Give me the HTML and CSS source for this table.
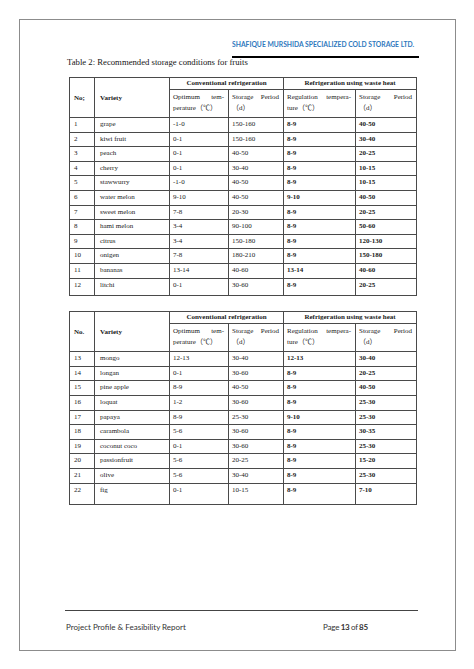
FILE: index.html
```html
<!DOCTYPE html>
<html lang="en">
<head>
<meta charset="utf-8">
<title>Recommended storage conditions for fruits</title>
<link rel="stylesheet" href="styles.css">
</head>
<body>
<div class="page">
  <header class="doc-header">
    <div class="company">SHAFIQUE MURSHIDA SPECIALIZED COLD STORAGE LTD.</div>
    <div class="header-rule"></div>
  </header>
  <div class="caption">Table 2: Recommended storage conditions for fruits</div>

  <table class="fruit-table t1">
    <colgroup>
      <col class="c-no"><col class="c-var"><col class="c-opt"><col class="c-sto"><col class="c-reg"><col class="c-sto2">
    </colgroup>
    <thead>
      <tr class="h-a">
        <th rowspan="2" class="mid no">No;</th>
        <th rowspan="2" class="mid var">Variety</th>
        <th colspan="2" class="group">Conventional refrigeration</th>
        <th colspan="2" class="group">Refrigeration using waste heat</th>
      </tr>
      <tr class="h-b">
        <td class="sub"><div class="just"><span>Optimum</span><span>tem-</span></div><div>perature（℃）</div></td>
        <td class="sub"><div class="just"><span>Storage</span><span>Period</span></div><div>（d）</div></td>
        <td class="sub"><div class="just"><span>Regulation</span><span>tempera-</span></div><div>ture（℃）</div></td>
        <td class="sub"><div class="just"><span>Storage</span><span>Period</span></div><div>（d）</div></td>
      </tr>
    </thead>
    <tbody>
      <tr class="r"><td class="no">1</td><td class="var">grape</td><td>-1-0</td><td>150-160</td><td class="b">8-9</td><td class="b">40-50</td></tr>
      <tr class="r"><td class="no">2</td><td class="var">kiwi fruit</td><td>0-1</td><td>150-160</td><td class="b">8-9</td><td class="b">30-40</td></tr>
      <tr class="r"><td class="no">3</td><td class="var">peach</td><td>0-1</td><td>40-50</td><td class="b">8-9</td><td class="b">20-25</td></tr>
      <tr class="r"><td class="no">4</td><td class="var">cherry</td><td>0-1</td><td>30-40</td><td class="b">8-9</td><td class="b">10-15</td></tr>
      <tr class="r"><td class="no">5</td><td class="var">stawwurry</td><td>-1-0</td><td>40-50</td><td class="b">8-9</td><td class="b">10-15</td></tr>
      <tr class="r"><td class="no">6</td><td class="var">water melon</td><td>9-10</td><td>40-50</td><td class="b">9-10</td><td class="b">40-50</td></tr>
      <tr class="r"><td class="no">7</td><td class="var">sweet melon</td><td>7-8</td><td>20-30</td><td class="b">8-9</td><td class="b">20-25</td></tr>
      <tr class="r"><td class="no">8</td><td class="var">hami melon</td><td>3-4</td><td>90-100</td><td class="b">8-9</td><td class="b">50-60</td></tr>
      <tr class="r"><td class="no">9</td><td class="var">citrus</td><td>3-4</td><td>150-180</td><td class="b">8-9</td><td class="b">120-130</td></tr>
      <tr class="r"><td class="no">10</td><td class="var">onigen</td><td>7-8</td><td>180-210</td><td class="b">8-9</td><td class="b">150-180</td></tr>
      <tr class="r"><td class="no">11</td><td class="var">bananas</td><td>13-14</td><td>40-60</td><td class="b">13-14</td><td class="b">40-60</td></tr>
      <tr class="r last1"><td class="no">12</td><td class="var">litchi</td><td>0-1</td><td>30-60</td><td class="b">8-9</td><td class="b">20-25</td></tr>
    </tbody>
  </table>

  <table class="fruit-table t2">
    <colgroup>
      <col class="c-no"><col class="c-var"><col class="c-opt"><col class="c-sto"><col class="c-reg"><col class="c-sto2">
    </colgroup>
    <thead>
      <tr class="h-a">
        <th rowspan="2" class="mid no">No.</th>
        <th rowspan="2" class="mid var">Variety</th>
        <th colspan="2" class="group">Conventional refrigeration</th>
        <th colspan="2" class="group">Refrigeration using waste heat</th>
      </tr>
      <tr class="h-b">
        <td class="sub"><div class="just"><span>Optimum</span><span>tem-</span></div><div>perature（℃）</div></td>
        <td class="sub"><div class="just"><span>Storage</span><span>Period</span></div><div>（d）</div></td>
        <td class="sub"><div class="just"><span>Regulation</span><span>tempera-</span></div><div>ture（℃）</div></td>
        <td class="sub"><div class="just"><span>Storage</span><span>Period</span></div><div>（d）</div></td>
      </tr>
    </thead>
    <tbody>
      <tr class="r"><td class="no">13</td><td class="var">mongo</td><td>12-13</td><td>30-40</td><td class="b">12-13</td><td class="b">30-40</td></tr>
      <tr class="r"><td class="no">14</td><td class="var">longan</td><td>0-1</td><td>30-60</td><td class="b">8-9</td><td class="b">20-25</td></tr>
      <tr class="r"><td class="no">15</td><td class="var">pine apple</td><td>8-9</td><td>40-50</td><td class="b">8-9</td><td class="b">40-50</td></tr>
      <tr class="r"><td class="no">16</td><td class="var">loquat</td><td>1-2</td><td>30-60</td><td class="b">8-9</td><td class="b">25-30</td></tr>
      <tr class="r"><td class="no">17</td><td class="var">papaya</td><td>8-9</td><td>25-30</td><td class="b">9-10</td><td class="b">25-30</td></tr>
      <tr class="r"><td class="no">18</td><td class="var">carambola</td><td>5-6</td><td>30-60</td><td class="b">8-9</td><td class="b">30-35</td></tr>
      <tr class="r"><td class="no">19</td><td class="var">coconut coco</td><td>0-1</td><td>30-60</td><td class="b">8-9</td><td class="b">25-30</td></tr>
      <tr class="r"><td class="no">20</td><td class="var">passionfruit</td><td>5-6</td><td>20-25</td><td class="b">8-9</td><td class="b">15-20</td></tr>
      <tr class="r"><td class="no">21</td><td class="var">olive</td><td>5-6</td><td>30-40</td><td class="b">8-9</td><td class="b">25-30</td></tr>
      <tr class="r last2"><td class="no">22</td><td class="var">fig</td><td>0-1</td><td>10-15</td><td class="b">8-9</td><td class="b">7-10</td></tr>
    </tbody>
  </table>

  <footer class="doc-footer">
    <span>Project Profile &amp; Feasibility Report</span>
    <span class="page-no">Page <b>13</b> of <b>85</b></span>
  </footer>
</div>
</body>
</html>
```

FILE: styles.css
```css
html, body {
  margin: 0;
  padding: 0;
  background: #ffffff;
}

.page {
  box-sizing: border-box;
  width: 437px;
  height: 632px;
  margin: 19px 0 0 19px;
  border: 1px solid #8c8c8c;
  display: flex;
  flex-direction: column;
}

.doc-header {
  margin: 19px 0 0 212px;
  width: 187px;
  display: block;
  flex: none;
}

.company {
  font-family: Lato, "Open Sans", sans-serif;
  font-weight: 700;
  font-size: 6.75px;
  line-height: 10px;
  color: #2e78bd;
  text-align: left;
  white-space: nowrap;
}

.header-rule {
  display: block;
  width: 187px;
  height: 2px;
  margin-top: 7px;
  background-color: #000000;
}

.caption {
  margin-left: 47px;
  margin-top: -1px;
  font-family: "Liberation Serif", serif;
  font-size: 8.7px;
  line-height: 10px;
  color: #151515;
}

.fruit-table {
  border-collapse: collapse;
  table-layout: fixed;
  width: 347px;
  margin-left: 49px;
  font-family: "Liberation Serif", "Noto Sans CJK SC", serif;
  font-size: 7px;
  line-height: 11px;
  color: #1a1a1a;
}

.t1 { margin-top: 10px; }
.t2 { margin-top: 15px; }

.c-no { width: 25px; }
.c-var { width: 75px; }
.c-opt { width: 59px; }
.c-sto { width: 55px; }
.c-reg { width: 72px; }
.c-sto2 { width: 61px; }

.fruit-table th,
.fruit-table td {
  border: 1px solid #4a4a4a;
  padding: 1px 3px 0 3px;
  vertical-align: top;
  text-align: left;
  font-weight: 400;
  white-space: nowrap;
  overflow: hidden;
}

.fruit-table th {
  font-weight: 700;
}

.fruit-table .mid {
  vertical-align: middle;
}

.fruit-table .no { padding-left: 4px; }
.fruit-table .var { padding-left: 5px; }

.fruit-table .group {
  text-align: center;
  vertical-align: middle;
  padding: 0;
}

.fruit-table .sub {
  padding: 2px 4px 0 3px;
}

.just {
  display: flex;
  justify-content: space-between;
}

.fruit-table .b {
  font-weight: 700;
}

.h-a { height: 12px; }
.h-b { height: 28px; }
.r { height: 14.6px; }
.last1 { height: 17.7px; }
.last2 { height: 21px; }

.doc-footer {
  box-sizing: border-box;
  margin: auto 0 18px 45px;
  width: 353px;
  padding: 11px 50px 0 1px;
  border-top: 1px solid #444444;
  display: flex;
  justify-content: space-between;
  font-family: Lato, "Open Sans", sans-serif;
  font-size: 8px;
  line-height: 10px;
  color: #333333;
}

.page-no {
  letter-spacing: -0.15px;
  word-spacing: -0.6px;
}

.doc-footer b {
  font-weight: 700;
}
```
